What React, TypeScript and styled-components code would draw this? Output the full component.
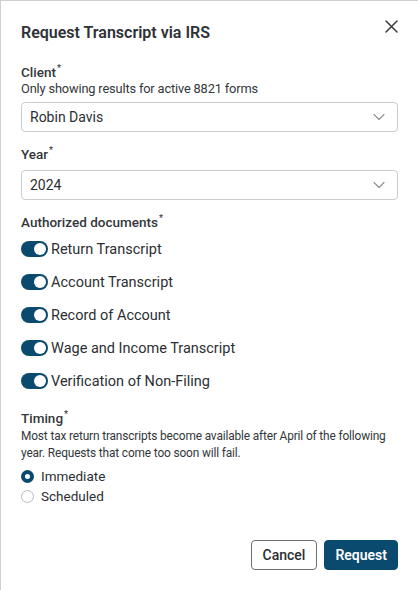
import React, { FC } from 'react';
import styled, { createGlobalStyle } from 'styled-components';

const GlobalStyle = createGlobalStyle`
	html, body {
		margin: 0;
		padding: 0;
		background: #ffffff;
	}
	body {
		font-family: Roboto, 'Noto Sans', sans-serif;
		color: #2b2f33;
	}
`;

const documents = [
	'Return Transcript',
	'Account Transcript',
	'Record of Account',
	'Wage and Income Transcript',
	'Verification of Non-Filing',
];

const ChevronDown: FC = () => (
	<svg width="12" height="8" viewBox="0 0 12 8" fill="none">
		<path d="M1 1.5l5 5 5-5" stroke="#8a8f95" strokeWidth="1.1" strokeLinecap="round" strokeLinejoin="round" />
	</svg>
);

const CloseIcon: FC = () => (
	<svg width="13" height="13" viewBox="0 0 13 13" fill="none">
		<path d="M1 1l11 11M12 1L1 12" stroke="#3a3d40" strokeWidth="1.5" strokeLinecap="round" />
	</svg>
);

const Field: FC<{ label: string; hint?: string; small?: boolean; children: React.ReactNode }> = ({
	label,
	hint,
	small,
	children,
}) => (
	<FieldBlock>
		<Label $withHint={!!hint}>
			{label}
			<Star>*</Star>
		</Label>
		{hint && <Hint $small={small}>{hint}</Hint>}
		{children}
	</FieldBlock>
);

export default function App() {
	return (
		<>
			<GlobalStyle />
			<Dialog>
				<Header>
					<Title>Request Transcript via IRS</Title>
					<CloseButton aria-label="Close">
						<CloseIcon />
					</CloseButton>
				</Header>

				<Field label="Client" hint="Only showing results for active 8821 forms">
					<Select>
						<span>Robin Davis</span>
						<ChevronDown />
					</Select>
				</Field>

				<Field label="Year">
					<Select>
						<span>2024</span>
						<ChevronDown />
					</Select>
				</Field>

				<Field label="Authorized documents">
					<ToggleList>
						{documents.map((doc) => (
							<ToggleRow key={doc}>
								<Toggle $on>
									<Knob />
								</Toggle>
								<ToggleLabel>{doc}</ToggleLabel>
							</ToggleRow>
						))}
					</ToggleList>
				</Field>

				<Field
					label="Timing"
					small
					hint="Most tax return transcripts become available after April of the following year. Requests that come too soon will fail."
				>
					<RadioList>
						<RadioRow>
							<Radio $checked />
							<RadioLabel>Immediate</RadioLabel>
						</RadioRow>
						<RadioRow>
							<Radio />
							<RadioLabel>Scheduled</RadioLabel>
						</RadioRow>
					</RadioList>
				</Field>

				<Footer>
					<Button>Cancel</Button>
					<Button $primary>Request</Button>
				</Footer>
			</Dialog>
		</>
	);
}

const Dialog = styled.div`
	box-sizing: border-box;
	width: 418px;
	height: 590px;
	border-left: 1px solid #cfd2d5;
	border-top: 1px solid #cfd2d5;
	padding: 19px 20px 20px 20px;
	display: flex;
	flex-direction: column;
`;

const Header = styled.div`
	display: flex;
	align-items: center;
	justify-content: space-between;
	height: 24px;
	margin-bottom: 19px;
`;

const Title = styled.h1`
	margin: 0;
	font-size: 16px;
	font-weight: 600;
	color: #2e3236;
`;

const CloseButton = styled.button`
	border: none;
	background: transparent;
	padding: 0;
	margin-top: -11px;
	display: flex;
	cursor: pointer;
`;

const FieldBlock = styled.div`
	display: flex;
	flex-direction: column;
	margin-bottom: 13px;
`;

const Label = styled.div<{ $withHint?: boolean }>`
	font-size: 13.5px;
	line-height: 18px;
	font-weight: 500;
	color: #33373b;
	margin-bottom: ${(p) => (p.$withHint ? '-1px' : '7px')};
`;

const Star = styled.sup`
	font-size: 9px;
	line-height: 0;
	position: relative;
	top: -1px;
	margin-left: 1px;
`;

const Hint = styled.div<{ $small?: boolean }>`
	font-size: ${(p) => (p.$small ? '11.9px' : '12.8px')};
	line-height: 17px;
	letter-spacing: -0.15px;
	color: #33373b;
	margin-top: ${(p) => (p.$small ? '2px' : '0')};
	margin-bottom: 5px;
`;

const Select = styled.div`
	box-sizing: border-box;
	height: 30px;
	border: 1px solid #c9cdd1;
	border-radius: 4px;
	padding: 0 12px 0 8px;
	display: flex;
	align-items: center;
	justify-content: space-between;
	font-size: 14px;
	color: #2b2f33;
`;

const ToggleList = styled.div`
	display: flex;
	flex-direction: column;
	gap: 13px;
	margin-top: 1px;
	margin-bottom: 5px;
`;

const ToggleRow = styled.label`
	display: flex;
	align-items: center;
	gap: 3px;
	height: 20px;
`;

const Toggle = styled.span<{ $on?: boolean }>`
	box-sizing: border-box;
	width: 27px;
	height: 16px;
	border-radius: 8px;
	background: ${(p) => (p.$on ? '#0b4a6f' : '#c9cdd1')};
	display: flex;
	align-items: center;
	justify-content: ${(p) => (p.$on ? 'flex-end' : 'flex-start')};
	padding: 0 2px;
`;

const Knob = styled.span`
	width: 12px;
	height: 12px;
	border-radius: 50%;
	background: #ffffff;
`;

const ToggleLabel = styled.span`
	font-size: 14.5px;
	color: #2b2f33;
`;

const RadioList = styled.div`
	display: flex;
	flex-direction: column;
	gap: 4px;
	margin-top: 1px;
`;

const RadioRow = styled.label`
	display: flex;
	align-items: center;
	gap: 7px;
	height: 16px;
`;

const Radio = styled.span<{ $checked?: boolean }>`
	box-sizing: border-box;
	width: 13px;
	height: 13px;
	border-radius: 50%;
	border: ${(p) => (p.$checked ? '4px solid #0b4a6f' : '1px solid #b8bcc0')};
	background: #ffffff;
`;

const RadioLabel = styled.span`
	font-size: 13.5px;
	color: #2b2f33;
`;

const Footer = styled.div`
	margin-top: auto;
	display: flex;
	justify-content: flex-end;
	gap: 7px;
`;

const Button = styled.button<{ $primary?: boolean }>`
	box-sizing: border-box;
	height: 30px;
	padding: 0 ${(p) => (p.$primary ? '10px' : '11px')};
	border-radius: 4px;
	font-family: Roboto, 'Noto Sans', sans-serif;
	font-size: 14px;
	font-weight: ${(p) => (p.$primary ? 600 : 500)};
	border: 1px solid ${(p) => (p.$primary ? '#0b4a6f' : '#6b7075')};
	background: ${(p) => (p.$primary ? '#0b4a6f' : '#ffffff')};
	color: ${(p) => (p.$primary ? '#ffffff' : '#2b2f33')};
	cursor: pointer;
`;
